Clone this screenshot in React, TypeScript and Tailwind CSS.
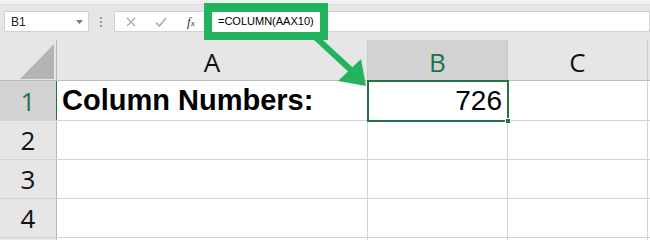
import React from "react";

const HeaderCell = ({ label, w, selected }: { label: string; w: string; selected?: boolean }) => (
  <div
    className={`${w} h-full shrink-0 flex items-center justify-center pt-[4px] border-r border-[#c9c9c9] ${
      selected ? "bg-[#d2d2d2] text-[#217346]" : "text-[#111]"
    }`}
  >
    <span className="text-[26px] leading-none" style={{ fontFamily: '"Open Sans", "Liberation Sans", sans-serif' }}>{label}</span>
  </div>
);

const Row = ({ n, selected, a, b, h }: { n: string; selected?: boolean; a?: React.ReactNode; b?: React.ReactNode; h: string }) => (
  <div className={`flex ${h} shrink-0 border-b border-[#d4d4d4] bg-white`}>
    <div
      className={`w-[57px] shrink-0 flex items-center justify-center border-r ${
        selected ? "bg-[#d2d2d2] text-[#217346] border-[#217346]" : "bg-[#e6e6e6] text-[#111] border-[#b8b8b8]"
      }`}
    >
      <span className="text-[26px] leading-none" style={{ fontFamily: '"Open Sans", "Liberation Sans", sans-serif' }}>{n}</span>
    </div>
    <div className="w-[311px] shrink-0 border-r border-[#d4d4d4] flex items-center pl-[5px]">{a}</div>
    <div className="w-[140px] shrink-0 border-r border-[#d4d4d4] flex items-center justify-end pr-[5px]">{b}</div>
    <div className="w-[140px] shrink-0 border-r border-[#d4d4d4]" />
    <div className="flex-1" />
  </div>
);

export default function App() {
  return (
    <div
      className="relative w-[650px] h-[240px] overflow-hidden bg-[#e6e6e6] flex flex-col"
      style={{ fontFamily: '"Liberation Sans", Arial, sans-serif' }}
    >
      {/* formula bar */}
      <div className="h-[40px] shrink-0 flex flex-col">
        <div className="h-[5px] bg-[#f1f1f1] border-b border-[#dcdcdc]" />
        <div className="flex items-start pt-[6px]">
          <div className="ml-[4px] w-[85px] h-[21px] bg-white border border-[#d2d2d2] flex items-center justify-between pl-[6px] pr-[5px]">
            <span className="text-[12px] text-[#222] leading-none">B1</span>
            <svg width="7" height="4" viewBox="0 0 7 4"><path d="M0 0 L7 0 L3.5 4 Z" fill="#7a7a7a" /></svg>
          </div>
          <div className="ml-[11px] h-[21px] flex flex-col justify-center gap-[2px]">
            <div className="w-[2px] h-[2px] bg-[#9a9a9a]" />
            <div className="w-[2px] h-[2px] bg-[#9a9a9a]" />
            <div className="w-[2px] h-[2px] bg-[#9a9a9a]" />
          </div>
          <div className="ml-[12px] flex-1 h-[21px] bg-white border border-[#d2d2d2] flex items-center">
            <svg className="ml-[11px]" width="10" height="10" viewBox="0 0 10 10">
              <path d="M1 1 L9 9 M9 1 L1 9" stroke="#a8a8a8" strokeWidth="1.3" />
            </svg>
            <svg className="ml-[19px]" width="12" height="10" viewBox="0 0 12 10">
              <path d="M1 5.5 L4.5 9 L11 1" stroke="#a8a8a8" strokeWidth="1.5" fill="none" />
            </svg>
            <span className="ml-[20px] text-[13px] italic text-[#333] leading-none" style={{ fontFamily: '"Liberation Serif", serif' }}>
              f<span className="text-[9px]">x</span>
            </span>
          </div>
        </div>
      </div>

      {/* column headers */}
      <div className="flex h-[41px] shrink-0 border-b border-[#bdbdbd]">
        <div className="w-[57px] shrink-0 h-full relative border-r border-[#b8b8b8]">
          <svg className="absolute left-[20px] top-[4px]" width="34" height="35" viewBox="0 0 34 35">
            <path d="M34 0 L34 35 L0 35 Z" fill="#b4b4b4" />
          </svg>
        </div>
        <HeaderCell label="A" w="w-[311px]" />
        <HeaderCell label="B" w="w-[140px]" selected />
        <HeaderCell label="C" w="w-[140px]" />
        <div className="flex-1" />
      </div>

      {/* rows */}
      <Row
        n="1"
        h="h-[40px]"
        selected
        a={<span className="text-[29px] font-bold text-black leading-none">Column Numbers:</span>}
        b={<span className="text-[28px] text-black leading-none">726</span>}
      />
      <Row n="2" h="h-[39px]" />
      <Row n="3" h="h-[39px]" />
      <Row n="4" h="h-[39px]" />
      <Row n="" h="h-[39px]" />

      {/* selected cell border */}
      <div className="absolute left-[367px] top-[80px] w-[142px] h-[42px] border-2 border-[#217346]" />
      <div className="absolute left-[505px] top-[118px] w-[6px] h-[6px] bg-[#217346] border border-white" />

      {/* callout */}
      <div className="absolute left-[204px] top-[3px] w-[124px] h-[37px] bg-[#21b35e] flex items-center justify-center">
        <div className="w-[108px] h-[20px] bg-white flex items-center pl-[6px]">
          <span className="text-[11px] text-black leading-none">=COLUMN(AAX10)</span>
        </div>
      </div>
      <svg className="absolute left-0 top-0 pointer-events-none" width="650" height="240" viewBox="0 0 650 240">
        <path d="M312 34 L352 71" stroke="#21b35e" strokeWidth="6" />
        <path d="M338 81 L361 59 L366 86 Z" fill="#21b35e" />
      </svg>
    </div>
  );
}
